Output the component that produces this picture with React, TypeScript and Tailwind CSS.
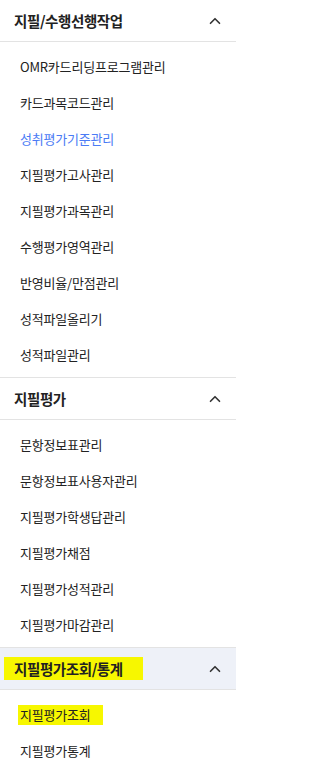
import { ChevronUp } from 'lucide-react'

type Item = { label: string; active?: boolean; marked?: boolean }
type Section = { title: string; current?: boolean; marked?: boolean; items: Item[] }

const sections: Section[] = [
  {
    title: '지필/수행선행작업',
    items: [
      { label: 'OMR카드리딩프로그램관리' },
      { label: '카드과목코드관리' },
      { label: '성취평가기준관리', active: true },
      { label: '지필평가고사관리' },
      { label: '지필평가과목관리' },
      { label: '수행평가영역관리' },
      { label: '반영비율/만점관리' },
      { label: '성적파일올리기' },
      { label: '성적파일관리' },
    ],
  },
  {
    title: '지필평가',
    items: [
      { label: '문항정보표관리' },
      { label: '문항정보표사용자관리' },
      { label: '지필평가학생답관리' },
      { label: '지필평가채점' },
      { label: '지필평가성적관리' },
      { label: '지필평가마감관리' },
    ],
  },
  {
    title: '지필평가조회/통계',
    current: true,
    marked: true,
    items: [{ label: '지필평가조회', marked: true }, { label: '지필평가통계' }],
  },
]

export default function App() {
  return (
    <div
      className="w-[236px] h-[766px] overflow-hidden bg-white text-[#222]"
      style={{ fontFamily: '"Noto Sans CJK KR", "Noto Sans", sans-serif' }}
    >
      {sections.map((s) => (
        <div key={s.title}>
          <div
            className={
              'flex items-center justify-between h-[42px] pl-[14px] pr-[12px] border-b border-[#e3e3e3] ' +
              (s.current ? 'bg-[#eef1f8]' : '')
            }
          >
            <span
              className={
                'text-[14.5px] font-bold tracking-[-0.4px] ' +
                (s.marked ? 'bg-[#f7f700] -ml-[10px] pl-[10px] pr-[20px] py-[1px]' : '')
              }
            >
              {s.title}
            </span>
            <ChevronUp className="w-[18px] h-[18px] text-[#333]" strokeWidth={2.2} />
          </div>
          <ul className="pt-[7px] pb-[4px] border-b border-[#e3e3e3]">
            {s.items.map((it) => (
              <li key={it.label} className="h-9 flex items-center pl-5">
                <span
                  className={
                    'text-[13px] tracking-[-0.2px] ' +
                    (it.active ? 'text-[#4b7bf5] ' : 'text-[#222] ') +
                    (it.marked ? 'bg-[#f7f700] -ml-[2px] pl-[2px] pr-[12px]' : '')
                  }
                >
                  {it.label}
                </span>
              </li>
            ))}
          </ul>
        </div>
      ))}
    </div>
  )
}
